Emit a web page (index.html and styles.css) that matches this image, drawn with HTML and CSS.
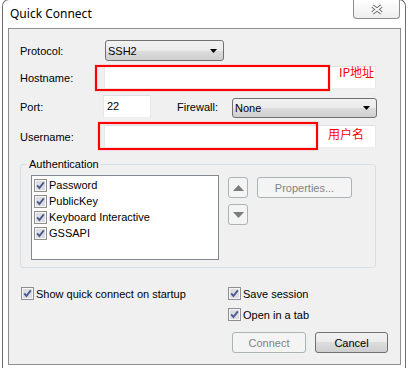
FILE: index.html
```html
<!DOCTYPE html>
<html>
<head>
    <title>Quick Connect</title>
    <link rel="stylesheet" href="styles.css">
</head>
<body>
    <svg class="defs" width="0" height="0">
        <symbol id="chk" viewBox="0 0 13 13">
            <rect x="0.5" y="0.5" width="12" height="12" fill="#f6f6f6" stroke="#8e8f8f"/>
            <rect x="2" y="2" width="9" height="9" fill="#dcdee2"/>
            <path d="M3.2 6.4 L5.4 9 L9.8 3.4" fill="none" stroke="#4a5a8e" stroke-width="1.9"/>
        </symbol>
    </svg>

    <div class="window">
        <div class="titlebar">
            <span class="title">Quick Connect</span>
            <span class="close">
                <svg width="14" height="11" viewBox="0 0 14 11">
                    <path d="M2.5 2 L11.5 9 M11.5 2 L2.5 9" stroke="#6f6f6f" stroke-width="3.6"/>
                    <path d="M2.5 2 L11.5 9 M11.5 2 L2.5 9" stroke="#ffffff" stroke-width="1.6"/>
                </svg>
            </span>
        </div>

        <div class="client">
            <!-- connection fields -->
            <div class="row r-protocol">
                <span class="lbl">Protocol:</span>
                <div class="combo combo-protocol"><span>SSH2</span><svg class="arrow" width="7" height="4"><polygon points="0,0 7,0 3.5,4" fill="#000"/></svg></div>
            </div>
            <div class="row r-host">
                <span class="lbl">Hostname:</span>
                <div class="field wide">
                    <span class="mark mark-host"></span>
                    <span class="note note-host">IP地址</span>
                </div>
            </div>
            <div class="row r-port">
                <span class="lbl">Port:</span>
                <div class="field port">22</div>
                <span class="lbl-fw">Firewall:</span>
                <div class="combo combo-fw"><span>None</span><svg class="arrow" width="7" height="4"><polygon points="0,0 7,0 3.5,4" fill="#000"/></svg></div>
            </div>
            <div class="row r-user">
                <span class="lbl">Username:</span>
                <div class="field wide">
                    <span class="mark mark-user"></span>
                    <span class="note note-user">用户名</span>
                </div>
            </div>

            <!-- authentication methods -->
            <fieldset class="auth">
                <legend>Authentication</legend>
                <div class="auth-body">
                    <ul class="methods">
                        <li><svg class="box"><use href="#chk"/></svg>Password</li>
                        <li><svg class="box"><use href="#chk"/></svg>PublicKey</li>
                        <li><svg class="box"><use href="#chk"/></svg>Keyboard Interactive</li>
                        <li><svg class="box"><use href="#chk"/></svg>GSSAPI</li>
                    </ul>
                    <div class="movers">
                        <button class="mv"><svg width="11" height="6"><polygon points="0,6 11,6 5.5,0" fill="#7d7d7d"/></svg></button>
                        <button class="mv"><svg width="11" height="6"><polygon points="0,0 11,0 5.5,6" fill="#7d7d7d"/></svg></button>
                    </div>
                    <button class="btn disabled props">Properties...</button>
                </div>
            </fieldset>

            <!-- options and actions -->
            <div class="options">
                <div class="opt opt-left"><svg class="box"><use href="#chk"/></svg>Show quick connect on startup</div>
                <div class="opt-right">
                    <div class="opt"><svg class="box"><use href="#chk"/></svg>Save session</div>
                    <div class="opt opt-tab"><svg class="box"><use href="#chk"/></svg>Open in a tab</div>
                    <div class="buttons">
                        <button class="btn disabled connect">Connect</button>
                        <button class="btn cancel">Cancel</button>
                    </div>
                </div>
            </div>
        </div>
    </div>
</body>
</html>
```

FILE: styles.css
```css
* {
    box-sizing: border-box;
}

body {
    margin: 0;
    background-color: #fff;
    font-family: "Liberation Sans", Arial, sans-serif;
    font-size: 11px;
    color: #000;
    overflow: hidden;
}

.defs {
    position: absolute;
}

.window {
    width: 404px;
    height: 369px;
    margin: -1px 0 0 2px;
    border: 1px solid #6e6e6e;
    border-bottom: none;
    border-radius: 7px 7px 0 0;
    background-color: #fff;
}

.titlebar {
    display: flex;
    height: 28px;
}

.title {
    padding-left: 7px;
    line-height: 28px;
    font-family: "Noto Sans", sans-serif;
    font-size: 12px;
}

.close {
    display: flex;
    align-items: center;
    justify-content: center;
    width: 47px;
    height: 19px;
    margin-left: auto;
    margin-right: 5px;
    padding-top: 1px;
    border: 1px solid #8d8d8d;
    border-top: none;
    border-radius: 0 0 4px 4px;
    background: linear-gradient(#ffffff, #eeeeee);
}

.client {
    height: 337px;
    margin: 0 4px 0 5px;
    padding: 0 11px;
    border: 1px solid #8e8f8f;
    background-color: #f0f0f0;
}

.row {
    display: flex;
    align-items: center;
}

.lbl {
    width: 84px;
}

.r-protocol {
    height: 21px;
    margin-top: 11px;
}

.r-host {
    height: 23px;
    margin-top: 5px;
}

.r-port {
    height: 23px;
    margin-top: 6px;
}

.r-user {
    height: 23px;
    margin-top: 7px;
}

.field {
    position: relative;
    height: 23px;
    padding-left: 3px;
    line-height: 21px;
    background-color: #fff;
    border: 1px solid;
    border-color: #dcdfe4 #e6e8ec #eceef1 #e6e8ec;
}

.wide {
    width: 272px;
}

.port {
    width: 48px;
    margin-left: -1px;
}

.lbl-fw {
    width: 55px;
    margin-left: 26px;
}

.combo {
    display: flex;
    align-items: center;
    height: 21px;
    padding-left: 2px;
    border: 1px solid #707070;
    border-radius: 3px;
    background: linear-gradient(#f2f2f2 0%, #ebebeb 50%, #dddddd 50%, #cfcfcf 100%);
}

.combo .arrow {
    margin-left: auto;
    margin-right: 6px;
}

.combo-protocol {
    width: 119px;
    margin-left: 1px;
}

.combo-fw {
    width: 145px;
    height: 20px;
    align-self: flex-end;
}

/* red annotations drawn over the inputs */
.mark {
    position: absolute;
    border: 2px solid #ff0000;
    box-shadow: 0 0 1px #ff6a6a, inset 0 0 1px #ff6a6a;
}

.mark-host {
    left: -10px;
    top: -2px;
    width: 235px;
    height: 26px;
}

.mark-user {
    left: -7px;
    top: -4px;
    width: 220px;
    height: 28px;
}

.note {
    position: absolute;
    color: #ff0000;
    font-family: "Noto Sans CJK SC", sans-serif;
    font-size: 12px;
    line-height: 14px;
}

.note-host {
    left: 234px;
    top: -2px;
}

.note-user {
    left: 223px;
    top: 1px;
}

.auth {
    width: 356px;
    margin: 10px 0 0 0;
    padding: 4px 10px 7px 10px;
    border: 1px solid #d5dfe5;
    border-radius: 3px;
}

.auth legend {
    margin-left: -4px;
    padding: 0 2px;
    line-height: 13px;
}

.auth-body {
    display: flex;
    align-items: flex-start;
}

.methods {
    width: 188px;
    height: 85px;
    margin: 0;
    padding: 1px 0 0 2px;
    list-style: none;
    background-color: #fff;
    border: 1px solid #828790;
}

.methods li {
    display: flex;
    align-items: center;
    height: 16px;
}

.box {
    width: 13px;
    height: 13px;
    margin-right: 2px;
    flex-shrink: 0;
}

.movers {
    display: flex;
    flex-direction: column;
    gap: 6px;
    margin: 2px 0 0 9px;
}

button {
    font-family: "Liberation Sans", Arial, sans-serif;
    font-size: 11px;
    padding: 0;
}

.mv {
    display: flex;
    align-items: center;
    justify-content: center;
    width: 20px;
    height: 21px;
    border: 1px solid #adb2b5;
    border-radius: 3px;
    background-color: #f4f4f4;
}

.btn {
    height: 21px;
    border: 1px solid #707070;
    border-radius: 3px;
    background: linear-gradient(#f2f2f2 0%, #ebebeb 50%, #dddddd 50%, #cfcfcf 100%);
    color: #000;
}

.btn.disabled {
    border-color: #adb2b5;
    background: #f4f4f4;
    color: #838383;
}

.props {
    width: 95px;
    margin: 2px 0 0 9px;
}

.options {
    display: flex;
    margin-top: 18px;
}

.opt {
    display: flex;
    align-items: center;
    height: 15px;
}

.opt-left {
    width: 207px;
    margin-left: 1px;
}

.opt-tab {
    margin-top: 6px;
}

.buttons {
    display: flex;
    gap: 9px;
    margin: 10px 0 0 4px;
}

.connect {
    width: 74px;
}

.cancel {
    width: 73px;
}
```
